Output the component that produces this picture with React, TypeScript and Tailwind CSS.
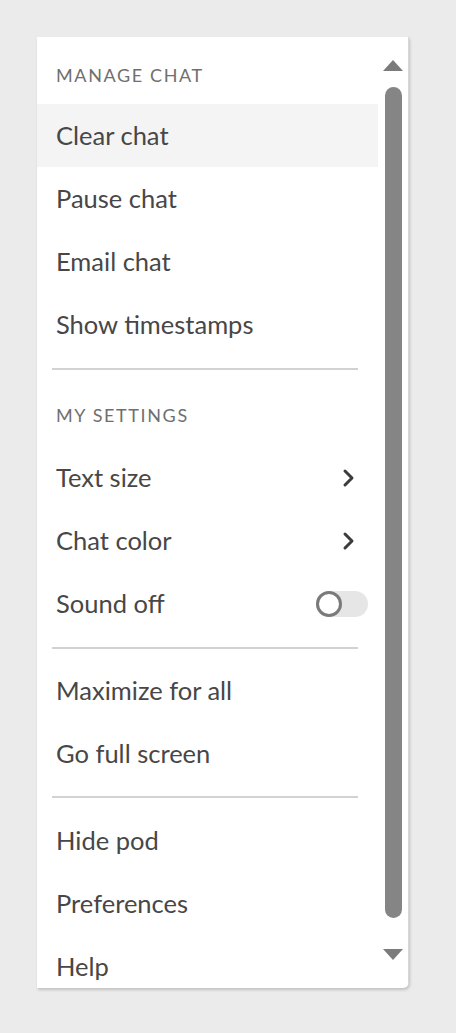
import type { ReactNode } from "react";

function Divider({ space = "my-[12px]" }: { space?: string }) {
  return <div className={`ml-[15px] mr-[20px] ${space} h-[2px] bg-[#d2d2d2]`} />;
}

function Header({ children, top, bottom }: { children: ReactNode; top: string; bottom: string }) {
  return (
    <div className={`${top} ${bottom} px-[19px] text-[18px] leading-[20px] tracking-[0.09em] uppercase text-[#6f6f6f]`}>
      {children}
    </div>
  );
}

function Item({
  label,
  active,
  right,
}: {
  label: string;
  active?: boolean;
  right?: ReactNode;
}) {
  return (
    <div
      className={`h-[63px] flex items-center justify-between pl-[19px] text-[25.5px] text-[#474747] ${
        active ? "bg-[#f4f4f4]" : ""
      }`}
    >
      <span className="leading-none">{label}</span>
      {right}
    </div>
  );
}

function Chevron() {
  return (
    <svg className="mr-[22px]" width="14" height="20" viewBox="0 0 14 20" fill="none">
      <path d="M3 3l7 7-7 7" stroke="#3c3c3c" strokeWidth="3" strokeLinecap="round" strokeLinejoin="round" />
    </svg>
  );
}

function Toggle() {
  return (
    <div className="mr-[10px] relative w-[52px] h-[26px] rounded-full bg-[#e6e6e6]">
      <div className="absolute left-0 top-0 w-[26px] h-[26px] rounded-full bg-white border-[3px] border-[#7a7a7a]" />
    </div>
  );
}

export default function App() {
  return (
    <div
      className="min-h-[1033px] bg-[#ebebeb] pt-[37px] pl-[37px]"
      style={{ fontFamily: "Lato, 'Open Sans', sans-serif" }}
    >
      <div className="w-[372px] h-[951px] bg-white rounded-br-[6px] overflow-hidden flex shadow-[1px_2px_3px_rgba(0,0,0,0.18)]">
        {/* menu list */}
        <div className="flex-1 overflow-hidden">
          <Header top="pt-[28px]" bottom="pb-[19px]">Manage chat</Header>
          <Item label="Clear chat" active />
          <Item label="Pause chat" />
          <Item label="Email chat" />
          <Item label="Show timestamps" />
          <Divider />
          <Header top="pt-[23px]" bottom="pb-[21px]">My settings</Header>
          <Item label="Text size" right={<Chevron />} />
          <Item label="Chat color" right={<Chevron />} />
          <Item label="Sound off" right={<Toggle />} />
          <Divider space="mt-[12px] mb-[10px]" />
          <Item label="Maximize for all" />
          <Item label="Go full screen" />
          <Divider space="mt-[11px] mb-[11px]" />
          <Item label="Hide pod" />
          <Item label="Preferences" />
          <Item label="Help" />
        </div>

        {/* scrollbar */}
        <div className="w-[31px] flex flex-col items-center border-r border-[#d6d6d6]">
          <svg className="mt-[23px]" width="20" height="11" viewBox="0 0 20 11">
            <path d="M10 0L20 11H0z" fill="#7b7b7b" />
          </svg>
          <div className="mt-[16px] w-[17px] h-[831px] rounded-full bg-[#858585]" />
          <svg className="mt-[31px]" width="20" height="11" viewBox="0 0 20 11">
            <path d="M0 0H20L10 11z" fill="#7b7b7b" />
          </svg>
        </div>
      </div>
    </div>
  );
}
